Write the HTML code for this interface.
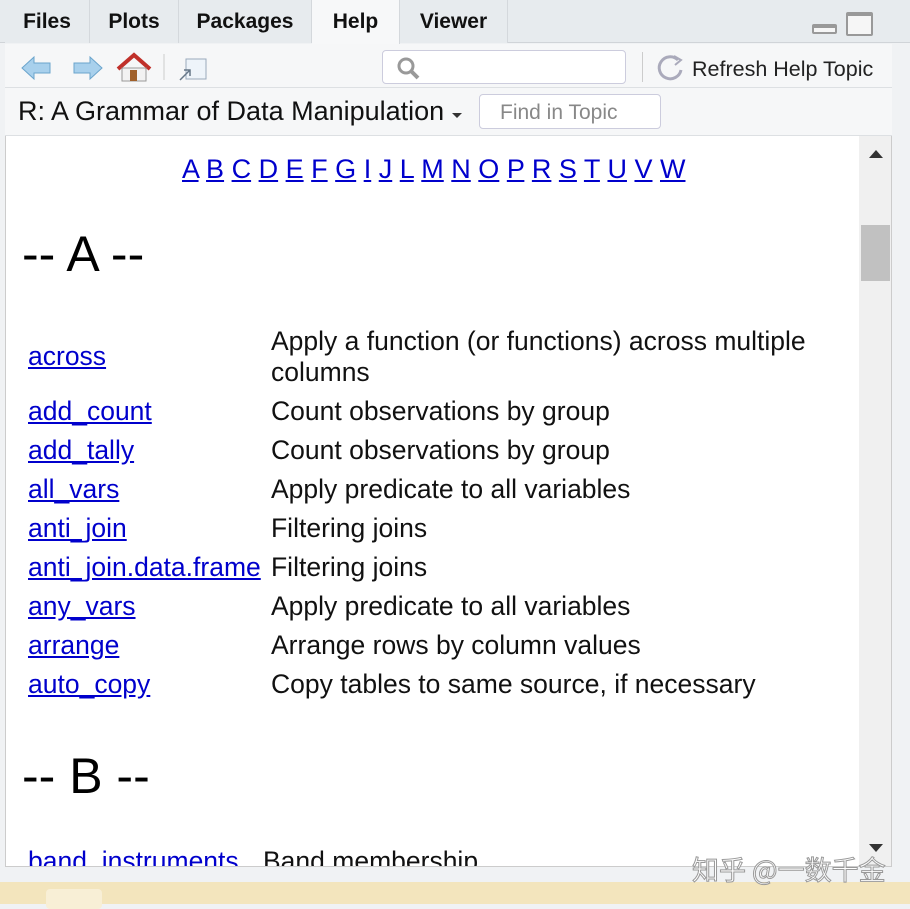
<!DOCTYPE html>
<html><head><style>
*{margin:0;padding:0;box-sizing:border-box}
body{width:910px;height:904px;position:relative;overflow:hidden;background:#f0f2f4;font-family:"Liberation Sans",sans-serif}
.abs{position:absolute}
.tab{position:absolute;top:0;height:43px;font-weight:bold;font-size:21px;line-height:44px;text-align:center;color:#111;border-right:1px solid #d4d8dc;background:#e7ebee}
a{color:#0000cc;text-decoration:underline}
.row{position:absolute;left:22px;font-size:26.5px;color:#111;line-height:31px}
.row a{position:absolute;left:0;white-space:nowrap}
.row span{position:absolute;left:243px;white-space:nowrap}
</style></head><body>
<div class="abs" style="left:0;top:0;width:910px;height:43px;background:#e7ebee;border-bottom:1px solid #d0d4d8"></div>
<div class="tab" style="left:5px;width:85px">Files</div>
<div class="tab" style="left:90px;width:89px">Plots</div>
<div class="tab" style="left:179px;width:133px">Packages</div>
<div class="tab" style="left:312px;width:88px;background:#f7f8f9;height:44px">Help</div>
<div class="tab" style="left:400px;width:108px">Viewer</div>
<div class="abs" style="left:812px;top:24px;width:25px;height:10px;border:2px solid #999;border-top-width:4px;background:#f6f6f6;border-radius:2px"></div>
<div class="abs" style="left:846px;top:12px;width:27px;height:24px;border:2px solid #999;border-top-width:4px;background:#f6f6f6;border-radius:2px"></div>
<div class="abs" style="left:5px;top:44px;width:887px;height:44px;background:#f6f7f8;border-bottom:1px solid #dde0e3"></div>
<svg class="abs" style="left:18px;top:52px" width="200" height="32">
<path d="M4 16 L16 5 L16 11 L32 11 L32 21 L16 21 L16 27 Z" fill="#a8d0ec" stroke="#6aa4cc"/>
<path d="M84 16 L72 5 L72 11 L56 11 L56 21 L72 21 L72 27 Z" fill="#a8d0ec" stroke="#6aa4cc"/>
<path d="M100 17 L116 3 L132 17" fill="none" stroke="#c0302a" stroke-width="4"/>
<rect x="104" y="16" width="24" height="13" fill="#f2f2f2" stroke="#999"/>
<rect x="112" y="18" width="7" height="11" fill="#a0602a"/>
<line x1="146" y1="2" x2="146" y2="28" stroke="#ccc"/>
<rect x="168" y="7" width="20" height="20" fill="#eef4fa" stroke="#9ab"/>
<path d="M162 28 L172 18 M166 18 L172 18 L172 24" stroke="#678" fill="none" stroke-width="1.5"/>
</svg>
<div class="abs" style="left:382px;top:50px;width:244px;height:34px;background:#fff;border:1px solid #ccd;border-radius:4px"></div>
<svg class="abs" style="left:395px;top:56px" width="28" height="26"><circle cx="11" cy="10" r="7" fill="none" stroke="#999" stroke-width="3"/><line x1="16" y1="15" x2="23" y2="22" stroke="#999" stroke-width="4"/></svg>
<div class="abs" style="left:642px;top:52px;width:1px;height:30px;background:#ccc"></div>
<svg class="abs" style="left:656px;top:53px" width="30" height="30"><path d="M22 7 A11 11 0 1 0 25 17" fill="none" stroke="#aab" stroke-width="3"/><path d="M18 3 L25 7 L19 12" fill="none" stroke="#aab" stroke-width="2"/></svg>
<div class="abs" style="left:692px;top:57px;font-size:21.5px;color:#222">Refresh Help Topic</div>
<div class="abs" style="left:5px;top:88px;width:887px;height:48px;background:#f6f7f8;border-bottom:1px solid #dde0e3"></div>
<div class="abs" style="left:18px;top:96px;font-size:27px;color:#111">R: A Grammar of Data Manipulation</div>
<div class="abs" style="left:452px;top:113px;width:0;height:0;border-left:5px solid transparent;border-right:5px solid transparent;border-top:5px solid #333"></div>
<div class="abs" style="left:479px;top:94px;width:182px;height:35px;background:#fff;border:1px solid #ccd;border-radius:4px;font-size:21px;color:#888;padding:6px 0 0 20px">Find in Topic</div>
<div class="abs" style="left:5px;top:136px;width:887px;height:731px;background:#fff;border:1px solid #ccc;border-top:none;overflow:hidden">
<div class="abs" style="left:853px;top:0;width:33px;height:731px;background:#f0f0f0"></div>
<div class="abs" style="left:863px;top:14px;width:0;height:0;border-left:7px solid transparent;border-right:7px solid transparent;border-bottom:8px solid #333"></div>
<div class="abs" style="left:855px;top:89px;width:29px;height:56px;background:#c1c1c1"></div>
<div class="abs" style="left:863px;top:708px;width:0;height:0;border-left:7px solid transparent;border-right:7px solid transparent;border-top:8px solid #333"></div>
<div class="abs" style="left:176px;top:18px;font-size:27px"><a>A</a> <a>B</a> <a>C</a> <a>D</a> <a>E</a> <a>F</a> <a>G</a> <a>I</a> <a>J</a> <a>L</a> <a>M</a> <a>N</a> <a>O</a> <a>P</a> <a>R</a> <a>S</a> <a>T</a> <a>U</a> <a>V</a> <a>W</a></div>
<div class="abs" style="left:16px;top:89px;font-size:50px;color:#000">-- A --</div>
<div class="row" style="top:190px"><a style="top:15px">across</a><span>Apply a function (or functions) across multiple<br>columns</span></div>
<div class="row" style="top:260px"><a>add_count</a><span>Count observations by group</span></div>
<div class="row" style="top:299px"><a>add_tally</a><span>Count observations by group</span></div>
<div class="row" style="top:338px"><a>all_vars</a><span>Apply predicate to all variables</span></div>
<div class="row" style="top:377px"><a>anti_join</a><span>Filtering joins</span></div>
<div class="row" style="top:416px"><a>anti_join.data.frame</a><span>Filtering joins</span></div>
<div class="row" style="top:455px"><a>any_vars</a><span>Apply predicate to all variables</span></div>
<div class="row" style="top:494px"><a>arrange</a><span>Arrange rows by column values</span></div>
<div class="row" style="top:533px"><a>auto_copy</a><span>Copy tables to same source, if necessary</span></div>
<div class="abs" style="left:16px;top:611px;font-size:50px;color:#000">-- B --</div>
<div class="row" style="top:710px"><a>band_instruments</a><span style="left:235px">Band membership</span></div>
</div>
<div class="abs" style="left:0;top:882px;width:910px;height:22px;background:#f3e5bd"></div>
<div class="abs" style="left:46px;top:889px;width:56px;height:20px;background:#f8efd6;border-radius:4px"></div>
<div class="abs" style="left:692px;top:849px;font-size:27px;color:#fff;font-family:'Noto Sans CJK SC',sans-serif;-webkit-text-stroke:1px #999">知乎 @一数千金</div>
</body></html>
